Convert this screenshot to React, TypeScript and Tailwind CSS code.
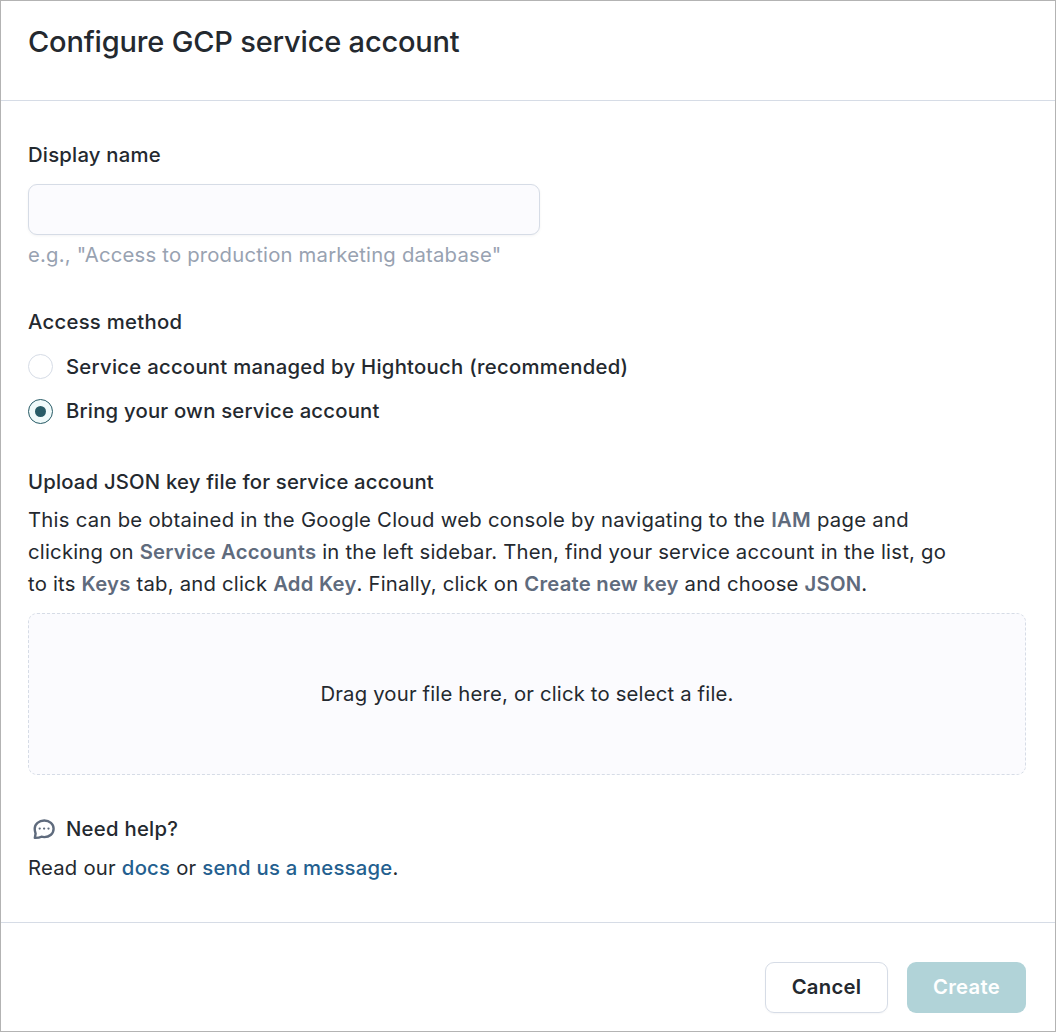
import React from "react";

const B = ({ children }: { children: React.ReactNode }) => (
  <span className="font-semibold text-[#5f6b7d]">{children}</span>
);

function Radio({ label, checked }: { label: string; checked?: boolean }) {
  return (
    <label
      className={
        checked
          ? "flex h-[24px] items-center whitespace-nowrap font-medium tracking-[0.21px]"
          : "flex h-[24px] items-center whitespace-nowrap font-medium tracking-[0.27px]"
      }
    >
      <span
        className={
          checked
            ? "mr-[13px] flex size-[25px] items-center justify-center rounded-full border-[1.5px] border-[#285b66] bg-[#f0fafa]"
            : "relative -top-px mr-[13px] flex size-[25px] items-center justify-center rounded-full border border-[#d6dce6] bg-white"
        }
      >
        {checked && <span className="size-[11px] rounded-full bg-[#285b66]" />}
      </span>
      {label}
    </label>
  );
}

export default function App() {
  return (
    <div className="flex h-[1032px] w-[1056px] flex-col border border-[#b3b3b3] bg-white font-['Inter',sans-serif] text-[20.3px] leading-[32px] text-[#24292f]">
      <header className="h-[100px] border-b border-[#d6dce6] px-[27px] pt-[21px]">
        <h1 className="whitespace-nowrap text-[29px] font-medium leading-[40px] tracking-[-0.18px]">Configure GCP service account</h1>
      </header>
      <main className="flex h-[822px] flex-col border-b border-[#d6dce6] px-[27px] pt-[38px]">
        <h2 className="font-medium tracking-[0.22px]">Display name</h2>
        <input className="mt-[13px] h-[51px] w-[512px] rounded-[9px] border border-[#d6dce6] bg-[#fbfbfe] px-4 shadow-[0_1px_3px_rgba(16,24,40,0.05)]" />
        <p className="mt-[4px] whitespace-nowrap tracking-[0.2px] text-[#98a2b1]">e.g., "Access to production marketing database"</p>
        <h2 className="mt-[35px] font-medium tracking-[0.28px]">Access method</h2>
        <div className="mt-[17px] flex flex-col gap-[20px]">
          <Radio label="Service account managed by Hightouch (recommended)" />
          <Radio label="Bring your own service account" checked />
        </div>
        <h2 className="mt-[43px] font-medium tracking-[0.19px]">Upload JSON key file for service account</h2>
        <p className="mt-[6px] whitespace-nowrap">
          <span className="tracking-[0.265px]">
            This can be obtained in the Google Cloud web console by navigating to the <B>IAM</B> page and
          </span>
          <br />
          <span className="tracking-[0.22px]">
            clicking on <B>Service Accounts</B> in the left sidebar. Then, find your service account in the list, go
          </span>
          <br />
          <span className="tracking-[0.215px]">
            to its <B>Keys</B> tab, and click <B>Add Key</B>. Finally, click on <B>Create new key</B> and choose <B>JSON</B>.
          </span>
        </p>
        <div className="mt-[13px] flex h-[162px] w-[998px] items-center justify-center rounded-[9px] border border-dashed border-[#d6dce6] bg-[#fbfbfe] tracking-[0.18px]">
          Drag your file here, or click to select a file.
        </div>
        <div className="mt-[38px] flex items-center font-medium tracking-[0.27px]">
          <svg className="ml-[5px] mr-[11px] size-[22px]" viewBox="0 0 22 22" fill="none" stroke="#5f6b7d" strokeWidth="2.4">
            <path d="M11.300 2.500c5.300 0 9.300 3.500 9.300 8.300s-4 8.300-9.300 8.300c-1 0-2-.1-2.900-.4-1.700.9-3.700 1.300-6.600 1.200.3-1.300.6-3 .8-4.400-.4-1.400-.9-2.900-.9-4.700 0-4.800 4.300-8.300 9.600-8.300z" strokeLinejoin="round" />
            <path d="M6.700 10.600h.01M11.100 10.600h.01M15.500 10.600h.01" strokeLinecap="round" strokeWidth="2.300" />
          </svg>
          Need help?
        </div>
        <p className="mt-[7px] whitespace-nowrap tracking-[0.23px]">
          Read our <a className="font-medium text-[#245f8f]">docs</a> or <a className="font-medium text-[#245f8f]">send us a message</a>.
        </p>
      </main>
      <footer className="flex justify-end gap-[19px] pr-[29px] pt-[39px]">
        <button className="h-[51px] w-[123px] rounded-[9px] border border-[#d6dce6] pb-[2px] font-semibold tracking-[0.27px] shadow-[0_1px_2px_rgba(16,24,40,0.04)]">Cancel</button>
        <button className="h-[51px] w-[119px] rounded-[9px] bg-[#b1d3d8] pb-[2px] font-semibold tracking-[0.3px] text-white">Create</button>
      </footer>
    </div>
  );
}
